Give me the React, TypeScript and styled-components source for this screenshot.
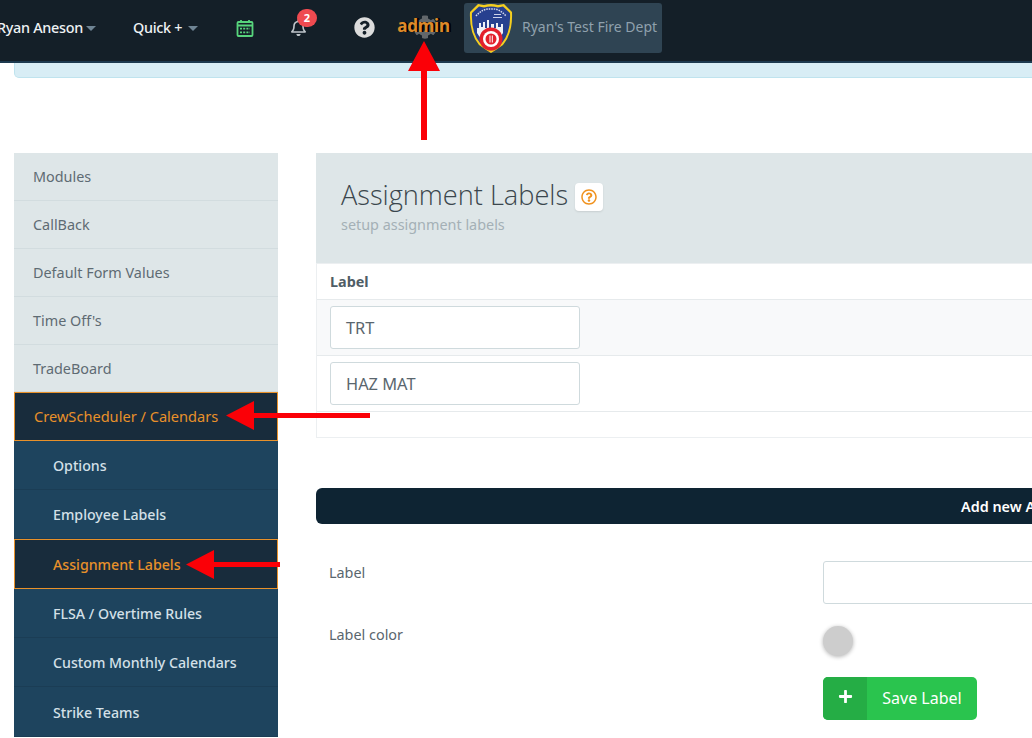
import React from 'react';
import styled, { createGlobalStyle } from 'styled-components';
import { FaCog, FaPlus, FaQuestionCircle, FaRegBell, FaRegQuestionCircle } from 'react-icons/fa';

const GlobalStyle = createGlobalStyle`
  html, body {
    margin: 0;
    padding: 0;
    background: #fff;
    overflow: hidden;
  }
  * {
    box-sizing: border-box;
  }
`;

const FONT = `"Noto Sans", "Open Sans", sans-serif`;

const Page = styled.div`
  position: relative;
  width: 1032px;
  height: 738px;
  overflow: hidden;
  font-family: ${FONT};
  font-size: 14.4px;
  color: #5a666e;
`;

const TopBar = styled.header`
  display: flex;
  align-items: center;
  height: 63px;
  padding: 0 0 6px 0;
  background: #141f28;
  border-bottom: 2px solid #1d3a4f;
  color: #eef2f4;
`;

const UserMenu = styled.div`
  display: flex;
  align-items: center;
  gap: 3px;
  width: 133px;
  margin-left: -3px;
  font-size: 14.4px;
  font-weight: 500;
  letter-spacing: -0.3px;
  white-space: nowrap;
`;

const QuickMenu = styled(UserMenu)`
  gap: 6px;
  width: 102px;
  margin-left: 3px;
`;

const Caret = styled.span`
  width: 0;
  height: 0;
  margin-top: 2px;
  border-left: 5px solid transparent;
  border-right: 5px solid transparent;
  border-top: 5px solid #6f8494;
`;

const IconSlot = styled.div<{ $width: number }>`
  position: relative;
  display: flex;
  align-items: center;
  justify-content: center;
  flex: 0 0 ${(p) => p.$width}px;
  height: 24px;
`;

const QuestionSlot = styled(IconSlot)`
  margin-left: 10px;
`;

const Badge = styled.span`
  position: absolute;
  top: -7px;
  left: 42px;
  width: 20px;
  height: 18px;
  border-radius: 10px;
  background: #ef4a50;
  color: #fff;
  font-size: 11px;
  font-weight: 700;
  line-height: 18px;
  text-align: center;
`;

const AdminLink = styled.div`
  position: relative;
  display: flex;
  align-items: center;
  justify-content: center;
  width: 53px;
  margin-left: 20px;
  margin-right: 1px;
  color: #dd8a2a;
  font-size: 17px;
  font-weight: 700;
  letter-spacing: -0.2px;
  text-shadow: 2px 0 0 #000;
  svg {
    position: absolute;
    left: 16px;
    top: -1px;
    color: #62676b;
  }
  span {
    position: relative;
    top: -2px;
  }
`;

const DeptCard = styled.div`
  display: flex;
  align-items: center;
  gap: 9px;
  width: 198px;
  height: 50px;
  margin-left: 13px;
  padding-left: 5px;
  border-radius: 3px;
  background: #2f4453;
  color: #8fa1ad;
  font-size: 14px;
  white-space: nowrap;
`;

const DeptName = styled.span`
  margin-bottom: 2px;
`;

const Notice = styled.div`
  width: 1100px;
  height: 15px;
  margin-left: 14px;
  background: #d8edf5;
  border: 1px solid #bfe3ee;
  border-top: 0;
  border-radius: 0 0 5px 5px;
`;

const Main = styled.main`
  display: flex;
  align-items: flex-start;
  gap: 38px;
  padding: 75px 0 0 14px;
`;

const SideNav = styled.nav`
  flex: 0 0 264px;
  display: flex;
  flex-direction: column;
`;

const NavItem = styled.div`
  display: flex;
  align-items: center;
  height: 48px;
  padding-left: 19px;
  background: #dee6e8;
  border-bottom: 1px solid #d2dcdf;
  color: #5e6b73;
  &:nth-child(5) {
    height: 47px;
  }
`;

const ActiveNavItem = styled.div`
  display: flex;
  align-items: center;
  height: 49px;
  padding: 0 0 2px 19px;
  background: #182c3c;
  border: 1px solid #e8912a;
  color: #e8912a;
  font-size: 14.6px;
`;

const SubNavItem = styled.div<{ $active?: boolean }>`
  display: flex;
  align-items: center;
  height: ${(p) => (p.$active ? '50px' : '49px')};
  padding-left: ${(p) => (p.$active ? '38px' : '39px')};
  padding-top: ${(p) => (p.$active ? '0' : '1px')};
  background: ${(p) => (p.$active ? '#182c3c' : '#1e445e')};
  border: ${(p) => (p.$active ? '1px solid #e8912a' : '0')};
  border-bottom: ${(p) => (p.$active ? '1px solid #e8912a' : '1px solid #1b3d55')};
  color: ${(p) => (p.$active ? '#e8912a' : '#d4e0e8')};
  font-size: 14.2px;
  font-weight: 500;
  &:last-child {
    height: 50px;
  }
`;

const Content = styled.section`
  flex: 0 0 1400px;
`;

const PageHeader = styled.div`
  height: 110px;
  padding: 23px 0 0 25px;
  background: #dee6e8;
`;

const TitleRow = styled.div`
  display: flex;
  align-items: center;
  gap: 7px;
`;

const Title = styled.h1`
  margin: 0;
  color: #3b464d;
  font-family: "Open Sans", ${FONT};
  font-size: 27.2px;
  font-weight: 300;
  line-height: 38px;
  letter-spacing: -0.02px;
`;

const HelpButton = styled.div`
  display: flex;
  align-items: center;
  justify-content: center;
  width: 28px;
  height: 28px;
  margin-top: 3px;
  border-radius: 4px;
  background: #fff;
  box-shadow: 0 1px 2px rgba(0, 0, 0, 0.1);
  color: #f0921e;
`;

const Subtitle = styled.div`
  margin-top: 1px;
  color: #a4b0b6;
  font-size: 14.4px;
`;

const LabelTable = styled.div`
  border: 1px solid #eceff1;
  border-right: 0;
`;

const TableHead = styled.div`
  display: flex;
  align-items: center;
  height: 36px;
  padding-left: 13px;
  border-bottom: 1px solid #e6eaec;
  color: #4f5d66;
  font-weight: 700;
`;

const TableRow = styled.div<{ $striped?: boolean }>`
  height: 56px;
  padding: 6px 0 0 13px;
  background: ${(p) => (p.$striped ? '#f8f9fa' : '#fff')};
  border-bottom: 1px solid #e6eaec;
`;

const TableFoot = styled.div`
  height: 25px;
`;

const TextBox = styled.div`
  display: flex;
  align-items: center;
  width: 250px;
  height: 43px;
  padding-left: 15px;
  background: #fff;
  border: 1px solid #cfdadd;
  border-radius: 3px;
  color: #5a666e;
  font-size: 16.4px;
`;

const AddBar = styled.div`
  height: 36px;
  margin-top: 50px;
  padding: 1px 0 0 645px;
  border-radius: 6px;
  background: #0e2433;
  color: #fff;
  font-weight: 600;
  line-height: 36px;
`;

const FormRow = styled.div<{ $height: number }>`
  display: flex;
  height: ${(p) => p.$height}px;
`;

const FirstFormRow = styled(FormRow)`
  margin-top: 37px;
`;

const FormLabel = styled.div`
  width: 507px;
  padding: 2px 0 0 13px;
  color: #5a666e;
`;

const ColorDot = styled.div`
  width: 30px;
  height: 30px;
  margin-top: 3px;
  border-radius: 50%;
  background: #cdcdcd;
  box-shadow: 0 1px 4px rgba(0, 0, 0, 0.3);
`;

const FormInput = styled(TextBox)`
  width: 400px;
`;

const SaveButton = styled.button`
  display: flex;
  align-items: stretch;
  width: 154px;
  height: 43px;
  padding: 0;
  margin-left: 507px;
  border: 0;
  border-radius: 5px;
  overflow: hidden;
  background: #2ac44e;
  color: #fff;
  font-family: ${FONT};
  font-size: 16px;
`;

const SaveIcon = styled.span`
  display: flex;
  align-items: center;
  justify-content: center;
  width: 44px;
  padding-bottom: 4px;
  background: #25ad45;
`;

const SaveText = styled.span`
  flex: 1;
  line-height: 43px;
  text-align: center;
`;

const ArrowLayer = styled.svg`
  position: absolute;
  left: 0;
  top: 0;
  pointer-events: none;
`;

const CalendarIcon = () => (
  <svg width="18" height="18" viewBox="0 0 18 18" fill="none" stroke="#57d47c" strokeWidth="1.8">
    <rect x="1.5" y="3" width="15" height="14" rx="1" />
    <path d="M1.5 6.5h15M5 1v3M13 1v3" />
    <path d="M4 9.700h10M4 13.300h10" strokeDasharray="2 1.200" />
  </svg>
);

const DeptShield = () => (
  <svg width="44" height="50" viewBox="0 0 44 50">
    <path d="M9 1 L15 2 Q22 0 29 2 L35 1 L43 9 Q44 30 34 42 Q27 47 22 50 Q17 47 10 42 Q0 30 1 9 Z" fill="#f5cf1f" />
    <path d="M10 3.500 L15 4.500 Q22 2.500 29 4.500 L34 3.500 L41 10 Q42 29 33 40 Q27 45 22 47.500 Q17 45 11 40 Q2 29 3 10 Z" fill="#27408f" />
    <path d="M7 13 Q14 5 22 6 Q30 5 37 13" fill="none" stroke="#d8dcef" strokeWidth="1.500" strokeDasharray="1.500 1" />
    <path d="M25 11h7v1h-7zM24 14h9v1h-9z" fill="#cdd3ea" />
    <path d="M8 30V25H10V20H12V24H14V19H16V25H18V17H20V25H22V21H25V25H27V20H29V24H32V21H34V30L30 36H12Z" fill="#eef0f6" />
    <circle cx="22" cy="36" r="11.500" fill="#e3202c" />
    <circle cx="22" cy="36" r="8" fill="#fff" />
    <circle cx="22" cy="36" r="5.500" fill="#e3202c" />
    <path d="M20.500 32.500h1v7h-1zM22.800 32.500h1v7h-1z" fill="#fff" />
  </svg>
);

const navItems = ['Modules', 'CallBack', 'Default Form Values', "Time Off's", 'TradeBoard'];
const subItems = ['Options', 'Employee Labels', 'Assignment Labels', 'FLSA / Overtime Rules', 'Custom Monthly Calendars', 'Strike Teams'];
const labels = ['TRT', 'HAZ MAT'];

const App: React.FC = () => {
  return (
    <Page>
      <GlobalStyle />
      <TopBar>
        <UserMenu>Ryan Aneson<Caret /></UserMenu>
        <QuickMenu>Quick +<Caret /></QuickMenu>
        <IconSlot $width={20}><CalendarIcon /></IconSlot>
        <IconSlot $width={86}>
          <FaRegBell size={17} color="#bfc5ca" />
          <Badge>2</Badge>
        </IconSlot>
        <QuestionSlot $width={26}><FaQuestionCircle size={21} color="#dcdcdc" /></QuestionSlot>
        <AdminLink>
          <FaCog size={24} />
          <span>admin</span>
        </AdminLink>
        <DeptCard>
          <DeptShield />
          <DeptName>Ryan's Test Fire Dept</DeptName>
        </DeptCard>
      </TopBar>
      <Notice />
      <Main>
        <SideNav>
          {navItems.map((item) => (
            <NavItem key={item}>{item}</NavItem>
          ))}
          <ActiveNavItem>CrewScheduler / Calendars</ActiveNavItem>
          {subItems.map((item) => (
            <SubNavItem key={item} $active={item === 'Assignment Labels'}>{item}</SubNavItem>
          ))}
        </SideNav>
        <Content>
          <PageHeader>
            <TitleRow>
              <Title>Assignment Labels</Title>
              <HelpButton><FaRegQuestionCircle size={16} /></HelpButton>
            </TitleRow>
            <Subtitle>setup assignment labels</Subtitle>
          </PageHeader>
          <LabelTable>
            <TableHead>Label</TableHead>
            {labels.map((label, i) => (
              <TableRow key={label} $striped={i === 0}>
                <TextBox>{label}</TextBox>
              </TableRow>
            ))}
            <TableFoot />
          </LabelTable>
          <AddBar>Add new Assignment Label</AddBar>
          <FirstFormRow $height={62}>
            <FormLabel>Label</FormLabel>
            <FormInput />
          </FirstFormRow>
          <FormRow $height={54}>
            <FormLabel>Label color</FormLabel>
            <ColorDot />
          </FormRow>
          <SaveButton>
            <SaveIcon><FaPlus size={15} /></SaveIcon>
            <SaveText>Save Label</SaveText>
          </SaveButton>
        </Content>
      </Main>
      <ArrowLayer width="1032" height="738" viewBox="0 0 1032 738">
        <g fill="#fb0007">
          <path d="M421 140V71h-13l16-30 16 30h-13v69z" />
          <path d="M370 413v5H254v12l-28-14.500 28-14.500v12z" />
          <path d="M280 562v5H214v12l-28-14.500 28-14.500v12z" />
        </g>
      </ArrowLayer>
    </Page>
  );
};

export default App;
